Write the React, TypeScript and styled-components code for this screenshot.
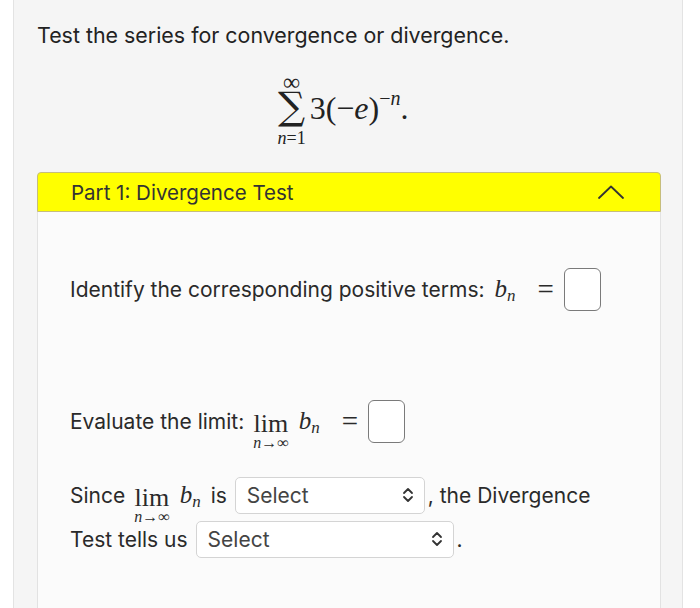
import React from "react";
import styled, { createGlobalStyle } from "styled-components";

const Global = createGlobalStyle`
  body {
    margin: 0;
    background: #ffffff;
    font-family: Inter, "Noto Sans", sans-serif;
    color: #222;
  }
`;

const Card = styled.div`
  margin-left: 13px;
  width: 670px;
  min-height: 608px;
  box-sizing: border-box;
  background: #f5f5f5;
  border-left: 1px solid #e3e3e3;
  border-right: 1px solid #e3e3e3;
  padding: 22px 21px 0 23px;
`;

const Title = styled.div`
  font-size: 21.4px;
  line-height: 26px;
`;

const Formula = styled.div`
  display: flex;
  justify-content: center;
  align-items: center;
  height: 82px;
  margin: 22px 0 0 -12px;
  font-family: "Liberation Serif", "DejaVu Serif", serif;
  color: #222;
`;

const SumStack = styled.div`
  display: flex;
  flex-direction: column;
  align-items: center;
  margin-right: 4px;
`;

const Inf = styled.span`
  font-size: 24px;
  line-height: 14px;
  margin-bottom: 3px;
`;

const Lower = styled.span`
  font-size: 18px;
  line-height: 18px;
  margin-top: 9px;
`;

const Sigma = styled.span`
  font-family: "DejaVu Serif", serif;
  font-size: 38px;
  line-height: 28px;
`;

const Term = styled.span`
  font-size: 32px;
  line-height: 34px;
  margin-bottom: 6px;
`;

const It = styled.i`
  font-style: italic;
`;

const Sup = styled.sup`
  font-size: 20px;
  line-height: 0;
  vertical-align: 14px;
`;

const Header = styled.div`
  margin-top: 20px;
  height: 40px;
  box-sizing: border-box;
  display: flex;
  align-items: center;
  justify-content: space-between;
  background: #ffff00;
  border: 1px solid #c6bd7d;
  border-radius: 4px 4px 0 0;
  padding: 0 36px 0 33px;
  font-size: 20.5px;
  color: #333;
`;

const Panel = styled.div`
  background: #fbfbfb;
  border: 1px solid #e2e2e2;
  border-top: none;
  min-height: 420px;
  padding: 55px 0 0 32px;
  font-size: 21px;
  color: #2a2a2a;
`;

const Row = styled.div<{ $gap?: number }>`
  display: flex;
  align-items: center;
  margin-top: ${(p) => p.$gap ?? 0}px;
  min-height: 44px;
  white-space: nowrap;
`;

const MathVar = styled.span`
  font-family: "Liberation Serif", "DejaVu Serif", serif;
  font-style: italic;
  font-size: 25px;
  margin: 0 10px 0 10px;
  sub {
    font-size: 17px;
    line-height: 0;
    vertical-align: -4px;
  }
`;

const Eq = styled.span`
  font-family: "Liberation Serif", "DejaVu Serif", serif;
  font-size: 29px;
  margin: 0 10px 0 12px;
`;

const AnswerBox = styled.span`
  display: inline-block;
  width: 37px;
  height: 43px;
  box-sizing: border-box;
  border: 1.5px solid #7a7a7a;
  border-radius: 6px;
  background: #fff;
`;

const Lim = styled.span`
  display: inline-flex;
  flex-direction: column;
  align-items: center;
  font-family: "Liberation Serif", "DejaVu Serif", serif;
  margin: 0 0 0 9px;
  position: relative;
  top: 9px;
`;

const LimWord = styled.span`
  font-size: 26px;
  line-height: 25px;
`;

const LimSub = styled.span`
  font-size: 16px;
  line-height: 14px;
  font-style: italic;
`;

const Select = styled.span<{ $w: number }>`
  display: inline-flex;
  align-items: center;
  justify-content: space-between;
  width: ${(p) => p.$w}px;
  height: 37px;
  box-sizing: border-box;
  padding: 0 10px 0 11px;
  border: 1px solid #d4d4d4;
  border-radius: 5px;
  background: #fff;
  color: #444;
  font-size: 21px;
  margin: 0 3px 0 8px;
`;

const Chevrons = () => (
  <svg width="12" height="16" viewBox="0 0 12 16" fill="none" stroke="#333" strokeWidth="1.8" strokeLinecap="round" strokeLinejoin="round">
    <path d="M2 6 L6 2 L10 6" />
    <path d="M2 10 L6 14 L10 10" />
  </svg>
);

const Caret = () => (
  <svg width="26" height="14" viewBox="0 0 26 14" fill="none" stroke="#333" strokeWidth="1.8" strokeLinecap="round" strokeLinejoin="round">
    <path d="M1 13 L13 1.5 L25 13" />
  </svg>
);

const Bn = () => (
  <MathVar>
    b<sub>n</sub>
  </MathVar>
);

const LimN = () => (
  <Lim>
    <LimWord>lim</LimWord>
    <LimSub>n→∞</LimSub>
  </Lim>
);

export default function App() {
  return (
    <>
      <Global />
      <Card>
        <Title>Test the series for convergence or divergence.</Title>
        <Formula>
          <SumStack>
            <Inf>∞</Inf>
            <Sigma>∑</Sigma>
            <Lower>
              <It>n</It>=1
            </Lower>
          </SumStack>
          <Term>
            3(−<It>e</It>)<Sup>−<It>n</It></Sup>.
          </Term>
        </Formula>
        <Header>
          <span>Part 1: Divergence Test</span>
          <Caret />
        </Header>
        <Panel>
          <Row>
            Identify the corresponding positive terms:
            <Bn />
            <Eq>=</Eq>
            <AnswerBox />
          </Row>
          <Row $gap={88}>
            Evaluate the limit:
            <LimN />
            <Bn />
            <Eq>=</Eq>
            <AnswerBox />
          </Row>
          <Row $gap={30}>
            Since
            <LimN />
            <Bn />
            is
            <Select $w={190}>
              Select
              <Chevrons />
            </Select>
            , the Divergence
          </Row>
          <Row $gap={0}>
            Test tells us
            <Select $w={258}>
              Select
              <Chevrons />
            </Select>
            .
          </Row>
        </Panel>
      </Card>
    </>
  );
}
